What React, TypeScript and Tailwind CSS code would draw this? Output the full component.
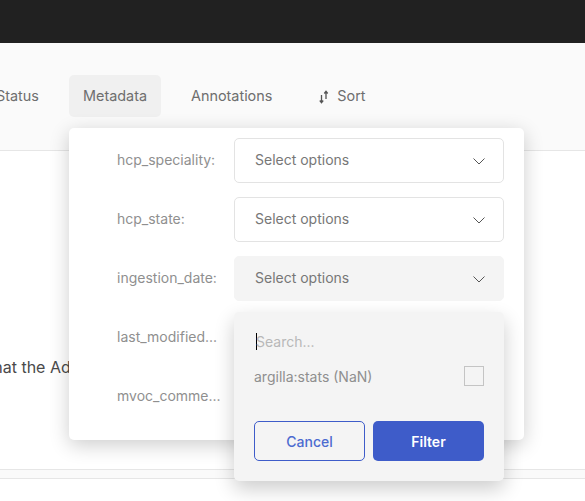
import React from 'react';

const Chevron = () => (
  <svg width="14" height="14" viewBox="0 0 14 14" fill="none" stroke="#555" strokeWidth="1" className="mt-[1px]">
    <path d="M1.5 4.5L7 10l5.5-5.5" />
  </svg>
);

const SortIcon = () => (
  <svg width="10" height="14" viewBox="0 0 10 14" fill="none" stroke="#555" strokeWidth="1.3" className="mt-[2px]">
    <path d="M2.5 5v7.5M0.8 10.5l1.7 2.2 1.7-2.2" />
    <path d="M7 9V1.5M5.3 3.5L7 1.3l1.7 2.2" />
  </svg>
);

const labels = ['hcp_speciality:', 'hcp_state:', 'ingestion_date:', 'last_modified...', 'mvoc_comme...'];

const Select = ({ active }: { active?: boolean }) => (
  <div className={`w-[270px] h-[45px] rounded-[5px] flex items-center justify-between pl-[20px] pr-[17px] text-[14px] text-[#777] border ${active ? 'bg-[#f4f4f4] border-[#f4f4f4]' : 'bg-white border-[#e3e3e3]'}`}>
    <span className="mb-[2px]">Select options</span>
    <Chevron />
  </div>
);

const OptionsPopover = () => (
  <div className="absolute left-0 top-[56px] w-[270px] h-[169px] z-10 bg-[#f4f4f4] rounded-[5px] shadow-[0_8px_20px_rgba(0,0,0,0.2)] px-[20px] pt-[18px] flex flex-col">
    <div className="flex items-center h-[22px] pl-[2px] text-[14px] text-[#b8b8b8]">
      <span className="w-px h-[17px] -mr-px bg-black" />
      <span>Search...</span>
    </div>
    <div className="flex items-center justify-between mt-[14px] h-[20px] text-[14px] text-[#8f8f8f]">
      <span>argilla:stats (NaN)</span>
      <span className="w-[20px] h-[20px] border border-[#c4c4c4]" />
    </div>
    <div className="flex gap-[8px] mt-[35px]">
      <button className="w-[111px] h-[40px] rounded-[5px] border border-[#3e5cc9] bg-transparent text-[14px] font-medium text-[#4c6bd0]">Cancel</button>
      <button className="w-[111px] h-[40px] rounded-[5px] bg-[#3e5cc9] text-[14px] font-semibold text-white">Filter</button>
    </div>
  </div>
);

export default function App() {
  return (
    <div className="w-[585px] h-[501px] overflow-hidden bg-white flex flex-col font-['Inter',sans-serif]">
      <div className="h-[43px] shrink-0 bg-[#212121]" />

      <div className="h-[108px] shrink-0 bg-[#fafafa] border-b border-[#e6e6e6] flex items-start pt-[32px] text-[14.4px] text-[#6e6e6e] relative">
        <span className="h-[42px] flex items-center -ml-[4px] w-[73px]">Status</span>
        <button className="h-[42px] w-[92px] rounded-[5px] bg-[#f0f0f0]">Metadata</button>
        <span className="h-[42px] flex items-center ml-[30px]">Annotations</span>
        <span className="h-[42px] flex items-center ml-[47px] gap-[8px]">
          <SortIcon />
          Sort
        </span>

        <div className="absolute left-[69px] top-[85px] w-[455px] z-10 bg-white rounded-[5px] shadow-[0_5px_20px_rgba(0,0,0,0.2)] pt-[10px] pb-[21px] pl-[48px] pr-[20px] flex flex-col gap-[14px]">
          {labels.map((label, i) => (
            <div key={label} className="flex items-center h-[45px]">
              <span className="w-[117px] mb-[2px] text-[14px] text-[#8f8f8f]">{label}</span>
              {i < 3 && (
                <div className="relative">
                  <Select active={i === 2} />
                  {i === 2 && <OptionsPopover />}
                </div>
              )}
            </div>
          ))}
        </div>
      </div>

      <div className="flex-1 flex flex-col">
        <div className="h-[318px] shrink-0 pt-[206px] -ml-[12px] text-[16px] leading-[20px] text-[#4a4a4a] whitespace-nowrap">
          that the Adverse Event
        </div>
        <div className="h-[10px] shrink-0 bg-[#fafafa] border-y border-[#e6e6e6]" />
      </div>
    </div>
  );
}
